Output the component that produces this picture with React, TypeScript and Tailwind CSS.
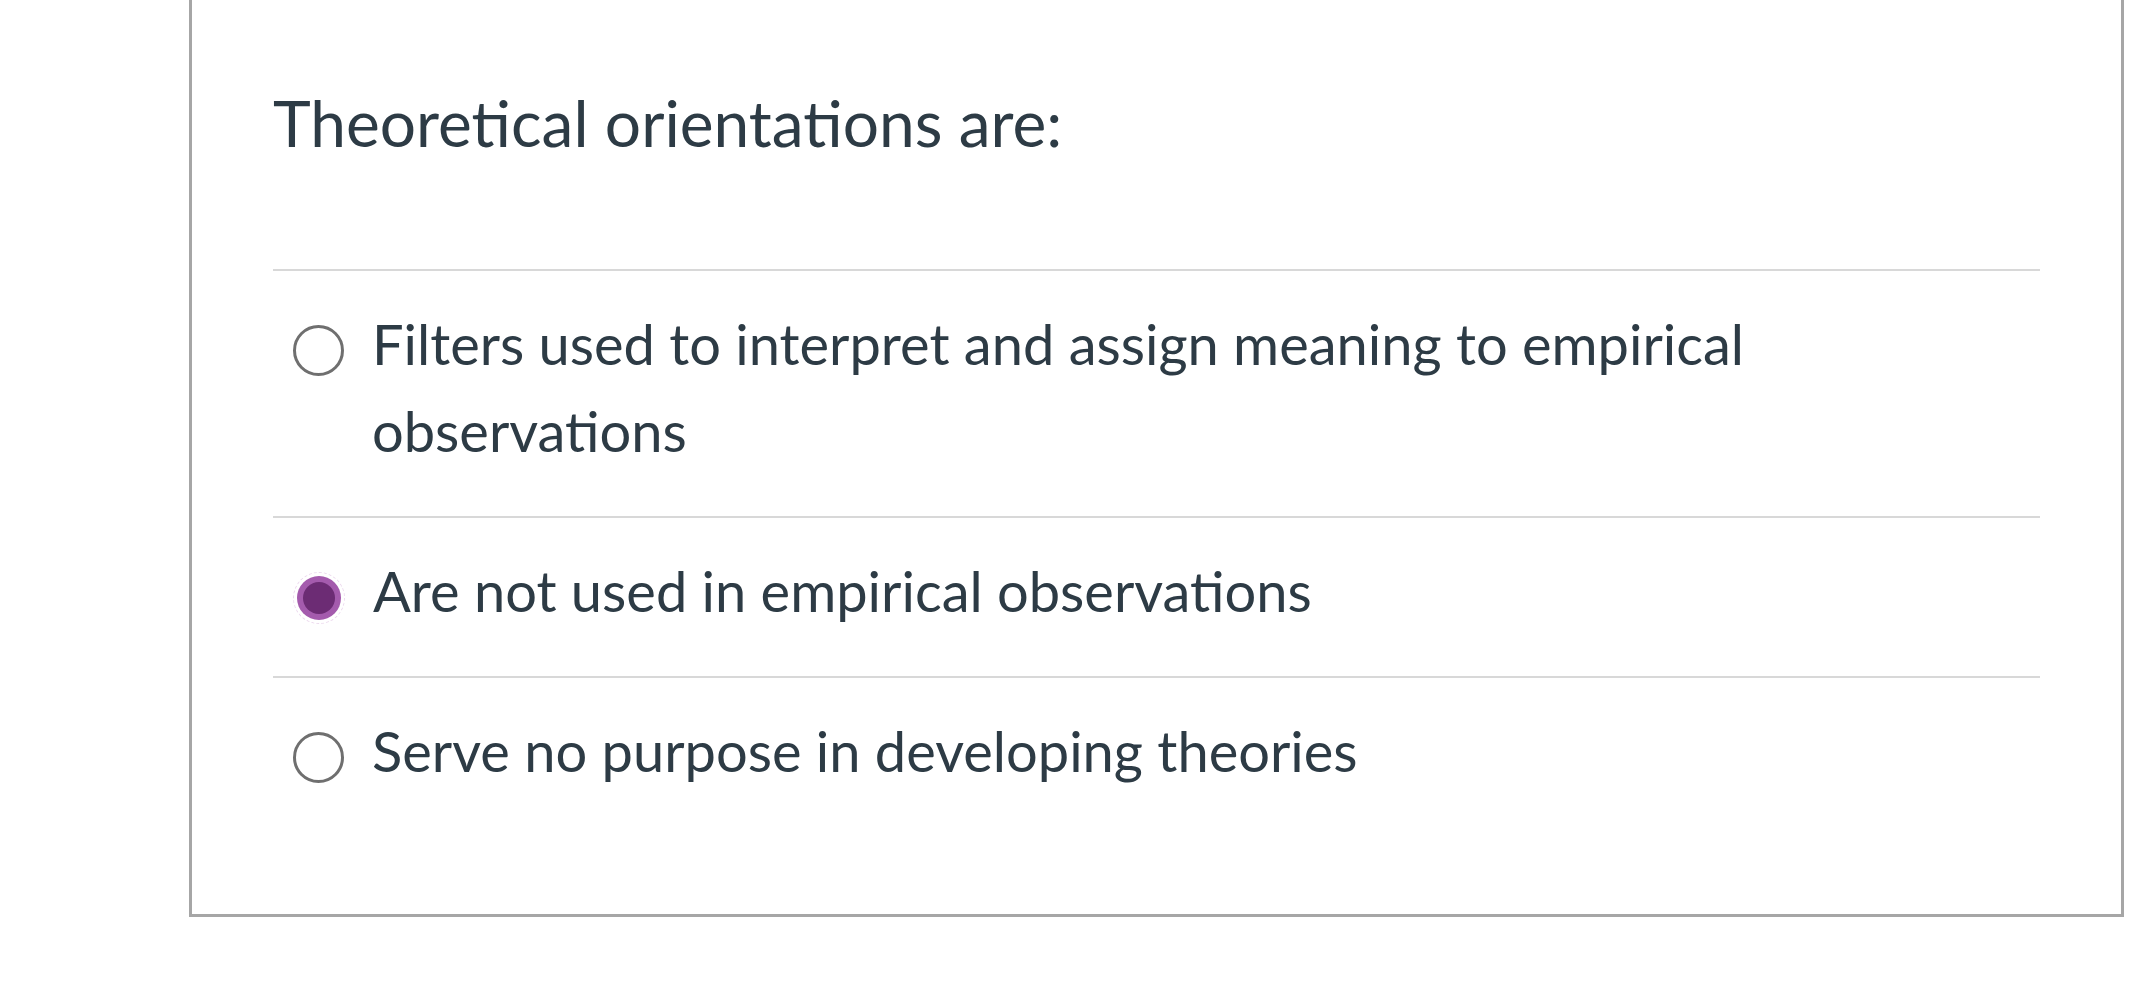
const options = [
  { label: "Filters used to interpret and assign meaning to empirical observations", checked: false },
  { label: "Are not used in empirical observations", checked: true },
  { label: "Serve no purpose in developing theories", checked: false },
];

function Radio({ checked }: { checked: boolean }) {
  if (checked) {
    return (
      <span className="mt-[25px] flex h-[52px] w-[52px] shrink-0 items-center justify-center rounded-full border border-dashed border-[#ecd9ee]">
        <span className="flex h-[44px] w-[44px] items-center justify-center rounded-full bg-[#a45bad]">
          <span className="h-[32px] w-[32px] rounded-full bg-[#6c2c74]" />
        </span>
      </span>
    );
  }
  return (
    <span className="mt-[25px] h-[51px] w-[51px] shrink-0 rounded-full border-[3px] border-[#6f6f6f] bg-white" />
  );
}

export default function App() {
  return (
    <div
      className="min-h-screen bg-white text-[#2d3b45]"
      style={{ fontFamily: "Lato, 'Noto Sans', sans-serif" }}
    >
      <div className="ml-[189px] mr-[16px] -mt-[20px] border-[3px] border-[#a6a6a6] bg-white pl-[81px] pr-[81px] pt-[90px] pb-[78px]">
        <h1 className="text-[64px] leading-[100px] font-normal">Theoretical orientations are:</h1>
        <ul className="mt-[96px]">
          {options.map((opt, i) => (
            <li
              key={i}
              className="flex gap-[28px] border-t-2 border-[#d8d8d8] pl-[20px] pt-[29px] pb-[42px]"
            >
              <Radio checked={opt.checked} />
              <span className="max-w-[1500px] text-[56px] leading-[87px]">{opt.label}</span>
            </li>
          ))}
        </ul>
      </div>
    </div>
  );
}
